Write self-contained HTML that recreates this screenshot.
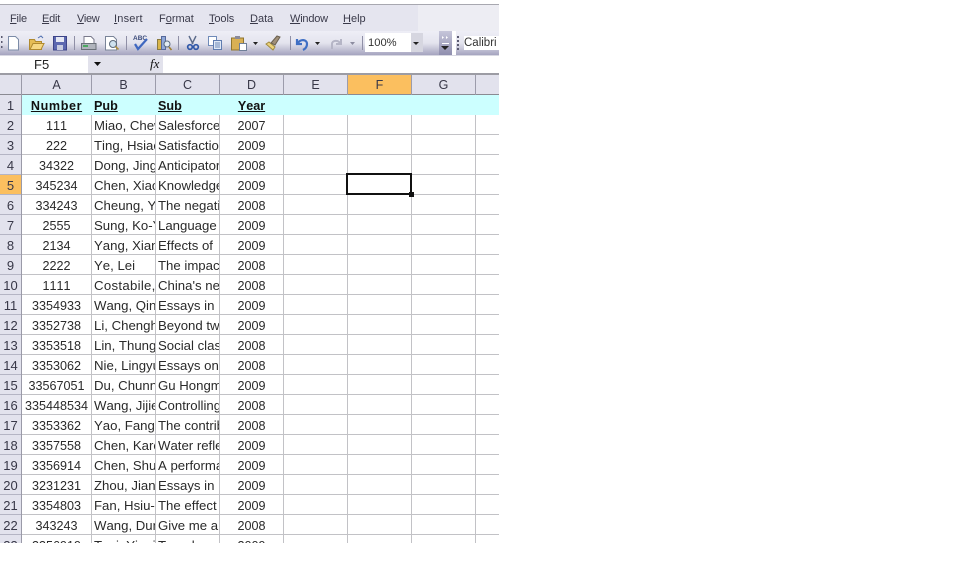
<!DOCTYPE html>
<html><head><meta charset="utf-8"><style>
html,body{margin:0;padding:0;background:#fff;width:962px;height:575px;overflow:hidden}
body{position:relative;font-family:"Liberation Sans",sans-serif;color:#2a2a2a}
.a{position:absolute}
.m{position:absolute;top:12px;font-size:11px;line-height:14px;color:#3a3a4a}
#sheet{position:absolute;left:0;top:75px;width:499px;height:468px;overflow:hidden}
.vl{position:absolute;top:0;width:1px;height:468px;background:#c2c2c6}
.hl{position:absolute;left:22px;width:477px;height:1px;background:#c2c2c6}
.rh{position:absolute;left:0;width:21px;height:19px;background:#e2e2ed;border-bottom:1px solid #b4b4c4;text-align:center;font-size:13px;line-height:22px;color:#383848}
.ch{position:absolute;top:0;height:19px;background:#e2e2ed;border-bottom:1px solid #8a8a92;text-align:center;font-size:12.5px;line-height:21px;color:#383848}
.c{position:absolute;height:20px;overflow:hidden;white-space:nowrap;font-size:12.6px;line-height:22px;font-kerning:none}
.n{left:22px;width:69px;text-align:center}
.p{left:94px;width:61px;font-size:13.2px}
.s{left:158px;width:61px;font-size:13.2px}
.y{left:220px;width:63px;text-align:center}
.b{font-weight:bold;text-decoration:underline;color:#111;font-size:12.6px}
svg{position:absolute;left:0;top:0}
</style></head><body>
<div class="a" style="left:0;top:4px;width:499px;height:1px;background:#a8a8b0"></div>
<div class="a" style="left:0;top:5px;width:418px;height:26px;background:#e5e5ef"></div>
<div class="a" style="left:418px;top:5px;width:81px;height:26px;background:#ededf3"></div>
<div class="m" style="left:10px;letter-spacing:-.2px"><u>F</u>ile</div>
<div class="m" style="left:42px;letter-spacing:-.2px"><u>E</u>dit</div>
<div class="m" style="left:77px;letter-spacing:-.3px"><u>V</u>iew</div>
<div class="m" style="left:114px;letter-spacing:.2px"><u>I</u>nsert</div>
<div class="m" style="left:159px">F<u>o</u>rmat</div>
<div class="m" style="left:209px;letter-spacing:-.1px"><u>T</u>ools</div>
<div class="m" style="left:250px"><u>D</u>ata</div>
<div class="m" style="left:290px;letter-spacing:-.2px"><u>W</u>indow</div>
<div class="m" style="left:343px"><u>H</u>elp</div>

<div class="a" style="left:0;top:31px;width:452px;height:24px;background:linear-gradient(#eeeef6,#e4e4ee 50%,#a5a4bf)"></div>
<div class="a" style="left:456px;top:31px;width:43px;height:24px;background:linear-gradient(#eeeef6,#e4e4ee 50%,#a5a4bf)"></div>
<div class="a" style="left:439px;top:31px;width:13px;height:24px;background:linear-gradient(#c6c6da,#8f8eae)"></div>
<div class="a" style="left:365px;top:33px;width:58px;height:19px;background:#fff"></div>
<div class="a" style="left:411px;top:33px;width:12px;height:19px;background:#d6d6e0"></div>
<div class="a" style="left:368px;top:36px;font-size:11.2px;line-height:14px;color:#333">100%</div>
<div class="a" style="left:464px;top:36px;font-size:11.5px;line-height:14px;color:#333;background:#fff;width:35px">Calibri</div>

<svg width="499" height="60" viewBox="0 0 499 60">
<g fill="#5a5a70"><rect x="1" y="36" width="1.5" height="2"/><rect x="1" y="41" width="1.5" height="2"/><rect x="1" y="46" width="1.500" height="2"/>
<rect x="457" y="36" width="2" height="2"/><rect x="457" y="40" width="2" height="2"/><rect x="457" y="44" width="2" height="2"/><rect x="457" y="48" width="2" height="2"/></g>
<g stroke="#8f8fa6" stroke-width="1"><path d="M74.500 36V50M126.500 36V50M178.500 36V50M290.500 36V50M362.500 36V50"/></g>
<path d="M8.500 36.500h7l3 3v10.500h-10z" fill="#fff" stroke="#7c8ca8"/>
<path d="M29.500 39.500h5l1 2h6v8h-12z" fill="#e6bd55" stroke="#b08a30"/><path d="M30 49.500l3-6h11l-3 6z" fill="#f6d884" stroke="#b08a30"/><path d="M38 38l3-2 2 2" fill="none" stroke="#4f6fb0"/>
<rect x="53.500" y="36.500" width="13" height="13.500" fill="#5c68b0" stroke="#3d4488"/><rect x="56" y="37" width="8" height="5" fill="#e5e8f4"/><rect x="57" y="45" width="6" height="5" fill="#c8cce0"/>
<path d="M84 36.500h7l3 3v4H84z" fill="#fff" stroke="#7a7a8c"/><rect x="81.500" y="43.500" width="14.500" height="6" fill="#b0b4bc" stroke="#6a7078"/><rect x="83" y="45" width="5" height="2" fill="#4ca860"/>
<path d="M105.500 36.500h8l3 3v10.500h-11z" fill="#fff" stroke="#7a8498"/><circle cx="113" cy="44" r="3.500" fill="#cfe2ef" stroke="#5c6a7c"/><path d="M115.500 46.500l3 3" stroke="#b09040" stroke-width="1.600"/>
<text x="133" y="40" font-size="6.500" font-weight="bold" fill="#3a4a7a" font-family="Liberation Sans">ABC</text><path d="M135 44l3 5 9-10" fill="none" stroke="#3f68c0" stroke-width="2.200"/>
<rect x="157.500" y="39.500" width="4" height="10" fill="#d9b54a" stroke="#8a7a40"/><rect x="161.500" y="36.500" width="4" height="13" fill="#8fa8d8" stroke="#56689a"/><circle cx="167" cy="44" r="3" fill="#e2edf4" stroke="#5a6a80"/><path d="M169 47l2.500 3" stroke="#a08030" stroke-width="1.600"/>
<path d="M189 36l4 8M196 36l-4 8" stroke="#5b6a8a" stroke-width="1.400" fill="none"/><circle cx="190" cy="47" r="2.300" fill="none" stroke="#2f57a8" stroke-width="1.700"/><circle cx="196" cy="47" r="2.300" fill="none" stroke="#2f57a8" stroke-width="1.700"/>
<rect x="208.500" y="36.500" width="8" height="9" fill="#fff" stroke="#6f8ab8"/><rect x="213.500" y="40.500" width="8" height="9" fill="#dfe8f6" stroke="#5f7cb0"/><path d="M215 43h5M215 45h5M215 47h5" stroke="#6f8ab8"/>
<rect x="231.500" y="38" width="12" height="12" fill="#d9b054" stroke="#8f7530"/><rect x="235" y="36" width="5" height="3" fill="#8a8a9a"/><rect x="239.500" y="43.500" width="7" height="7" fill="#fff" stroke="#6f7f98"/>
<path d="M253 42h5l-2.500 3z" fill="#222"/>
<path d="M266 44l7 6 2-3-6-5z" fill="#ecd27a" stroke="#a08a40"/><path d="M271 43l6-7 3 1-5 8z" fill="#a08f78" stroke="#6a6050"/>
<path d="M297 39v5h5M298 43c2-4 9-4 9 1 0 3-2 5-4 6" fill="none" stroke="#3f6fc4" stroke-width="2.200"/>
<path d="M315 42h5l-2.500 3z" fill="#222"/>
<path d="M341 39v5h-5M340 43c-2-3-8-3-8 1v5" fill="none" stroke="#b5b5c6" stroke-width="2"/>
<path d="M350 42h5l-2.500 3z" fill="#8c8ca0"/>
<path d="M413 42h6l-3 3z" fill="#222"/>
<path d="M442 36l2 1.500-2 1.500zM446 36l2 1.500-2 1.500z" fill="#fff"/><rect x="442" y="43" width="7" height="1" fill="#fff"/><path d="M441 46h8l-4 4z" fill="#222"/>
</svg>

<div class="a" style="left:0;top:55px;width:499px;height:1px;background:#d8d8e2"></div>
<div class="a" style="left:0;top:56px;width:88px;height:17px;background:#fff"></div>
<div class="a" style="left:88px;top:56px;width:75px;height:17px;background:#e2e2ec"></div>
<div class="a" style="left:34px;top:57px;font-size:13px;line-height:15px;color:#222">F5</div>
<svg width="170" height="75" viewBox="0 0 170 75"><path d="M94 62h7l-3.500 4z" fill="#111"/></svg>
<div class="a" style="left:150px;top:57px;font-family:'Liberation Serif',serif;font-style:italic;font-size:13px;line-height:14px;color:#111">fx</div>
<div class="a" style="left:0;top:73px;width:499px;height:2px;background:#9c9ca4"></div>

<div id="sheet">
<div class="a" style="left:22px;top:20px;width:477px;height:20px;background:#ccffff"></div>
<div class="hl" style="top:59px"></div><div class="hl" style="top:79px"></div><div class="hl" style="top:99px"></div><div class="hl" style="top:119px"></div><div class="hl" style="top:139px"></div><div class="hl" style="top:159px"></div><div class="hl" style="top:179px"></div><div class="hl" style="top:199px"></div><div class="hl" style="top:219px"></div><div class="hl" style="top:239px"></div><div class="hl" style="top:259px"></div><div class="hl" style="top:279px"></div><div class="hl" style="top:299px"></div><div class="hl" style="top:319px"></div><div class="hl" style="top:339px"></div><div class="hl" style="top:359px"></div><div class="hl" style="top:379px"></div><div class="hl" style="top:399px"></div><div class="hl" style="top:419px"></div><div class="hl" style="top:439px"></div><div class="hl" style="top:459px"></div>
<div class="vl" style="left:91px;top:40px"></div><div class="vl" style="left:155px;top:40px"></div><div class="vl" style="left:219px;top:40px"></div><div class="vl" style="left:283px;top:40px"></div><div class="vl" style="left:347px;top:40px"></div><div class="vl" style="left:411px;top:40px"></div><div class="vl" style="left:475px;top:40px"></div>

<div class="ch" style="left:0;width:21px"></div>
<div class="ch" style="left:22px;width:69px">A</div>
<div class="ch" style="left:92px;width:63px">B</div>
<div class="ch" style="left:156px;width:63px">C</div>
<div class="ch" style="left:220px;width:63px">D</div>
<div class="ch" style="left:284px;width:63px">E</div>
<div class="ch" style="left:348px;width:63px;background:#fbbf5f">F</div>
<div class="ch" style="left:412px;width:63px">G</div>
<div class="ch" style="left:476px;width:23px"></div>
<div class="a" style="left:21px;top:0;width:1px;height:468px;background:#9a9aa8"></div>
<div class="a" style="left:91px;top:0;width:1px;height:20px;background:#9c9cab"></div><div class="a" style="left:155px;top:0;width:1px;height:20px;background:#9c9cab"></div><div class="a" style="left:219px;top:0;width:1px;height:20px;background:#9c9cab"></div><div class="a" style="left:283px;top:0;width:1px;height:20px;background:#9c9cab"></div><div class="a" style="left:347px;top:0;width:1px;height:20px;background:#9c9cab"></div><div class="a" style="left:411px;top:0;width:1px;height:20px;background:#9c9cab"></div><div class="a" style="left:475px;top:0;width:1px;height:20px;background:#9c9cab"></div>

<div class="rh" style="top:20px">1</div><div class="c n b" style="top:20px;letter-spacing:.6px">Number</div><div class="c p b" style="top:20px">Pub</div><div class="c s b" style="top:20px">Sub</div><div class="c y b" style="top:20px">Year</div>
<div class="rh" style="top:40px">2</div><div class="c n" style="top:40px">111</div><div class="c p" style="top:40px">Miao, Chew</div><div class="c s" style="top:40px">Salesforce</div><div class="c y" style="top:40px">2007</div>
<div class="rh" style="top:60px">3</div><div class="c n" style="top:60px">222</div><div class="c p" style="top:60px">Ting, Hsiao</div><div class="c s" style="top:60px">Satisfaction</div><div class="c y" style="top:60px">2009</div>
<div class="rh" style="top:80px">4</div><div class="c n" style="top:80px">34322</div><div class="c p" style="top:80px">Dong, Jing</div><div class="c s" style="top:80px">Anticipatory</div><div class="c y" style="top:80px">2008</div>
<div class="rh" style="top:100px;background:#fbbf5f">5</div><div class="c n" style="top:100px">345234</div><div class="c p" style="top:100px">Chen, Xiao</div><div class="c s" style="top:100px">Knowledge</div><div class="c y" style="top:100px">2009</div>
<div class="rh" style="top:120px">6</div><div class="c n" style="top:120px">334243</div><div class="c p" style="top:120px">Cheung, Yin</div><div class="c s" style="top:120px">The negative</div><div class="c y" style="top:120px">2008</div>
<div class="rh" style="top:140px">7</div><div class="c n" style="top:140px">2555</div><div class="c p" style="top:140px">Sung, Ko-Yin</div><div class="c s" style="top:140px">Language</div><div class="c y" style="top:140px">2009</div>
<div class="rh" style="top:160px">8</div><div class="c n" style="top:160px">2134</div><div class="c p" style="top:160px">Yang, Xiang</div><div class="c s" style="top:160px">Effects of</div><div class="c y" style="top:160px">2009</div>
<div class="rh" style="top:180px">9</div><div class="c n" style="top:180px">2222</div><div class="c p" style="top:180px">Ye, Lei</div><div class="c s" style="top:180px">The impact</div><div class="c y" style="top:180px">2008</div>
<div class="rh" style="top:200px">10</div><div class="c n" style="top:200px">1111</div><div class="c p" style="top:200px;letter-spacing:.3px">Costabile,</div><div class="c s" style="top:200px">China's new</div><div class="c y" style="top:200px">2008</div>
<div class="rh" style="top:220px">11</div><div class="c n" style="top:220px">3354933</div><div class="c p" style="top:220px">Wang, Qing</div><div class="c s" style="top:220px">Essays in new</div><div class="c y" style="top:220px">2009</div>
<div class="rh" style="top:240px">12</div><div class="c n" style="top:240px">3352738</div><div class="c p" style="top:240px">Li, Chenghui</div><div class="c s" style="top:240px">Beyond two</div><div class="c y" style="top:240px">2009</div>
<div class="rh" style="top:260px">13</div><div class="c n" style="top:260px">3353518</div><div class="c p" style="top:260px">Lin, Thung</div><div class="c s" style="top:260px">Social class</div><div class="c y" style="top:260px">2008</div>
<div class="rh" style="top:280px">14</div><div class="c n" style="top:280px">3353062</div><div class="c p" style="top:280px">Nie, Lingyu</div><div class="c s" style="top:280px">Essays on</div><div class="c y" style="top:280px">2008</div>
<div class="rh" style="top:300px">15</div><div class="c n" style="top:300px">33567051</div><div class="c p" style="top:300px">Du, Chunn</div><div class="c s" style="top:300px">Gu Hongming</div><div class="c y" style="top:300px">2009</div>
<div class="rh" style="top:320px">16</div><div class="c n" style="top:320px">335448534</div><div class="c p" style="top:320px">Wang, Jijie</div><div class="c s" style="top:320px">Controlling</div><div class="c y" style="top:320px">2008</div>
<div class="rh" style="top:340px">17</div><div class="c n" style="top:340px">3353362</div><div class="c p" style="top:340px">Yao, Fangt</div><div class="c s" style="top:340px">The contrib</div><div class="c y" style="top:340px">2008</div>
<div class="rh" style="top:360px">18</div><div class="c n" style="top:360px">3357558</div><div class="c p" style="top:360px">Chen, Kare</div><div class="c s" style="top:360px">Water reflect</div><div class="c y" style="top:360px">2009</div>
<div class="rh" style="top:380px">19</div><div class="c n" style="top:380px">3356914</div><div class="c p" style="top:380px">Chen, Shu</div><div class="c s" style="top:380px">A performance</div><div class="c y" style="top:380px">2009</div>
<div class="rh" style="top:400px">20</div><div class="c n" style="top:400px">3231231</div><div class="c p" style="top:400px">Zhou, Jian</div><div class="c s" style="top:400px">Essays in in</div><div class="c y" style="top:400px">2009</div>
<div class="rh" style="top:420px">21</div><div class="c n" style="top:420px">3354803</div><div class="c p" style="top:420px">Fan, Hsiu-</div><div class="c s" style="top:420px">The effect</div><div class="c y" style="top:420px">2009</div>
<div class="rh" style="top:440px">22</div><div class="c n" style="top:440px">343243</div><div class="c p" style="top:440px">Wang, Dun</div><div class="c s" style="top:440px">Give me a</div><div class="c y" style="top:440px">2008</div>
<div class="rh" style="top:460px">23</div><div class="c n" style="top:460px">3356919</div><div class="c p" style="top:460px">Tsai, Yingi</div><div class="c s" style="top:460px">Travel</div><div class="c y" style="top:460px">2009</div>
<div class="a" style="left:346px;top:98px;width:62px;height:18px;border:2px solid #111;background:#fff"></div>
<div class="a" style="left:409px;top:117px;width:5px;height:5px;background:#111"></div>
</div>
</body></html>
